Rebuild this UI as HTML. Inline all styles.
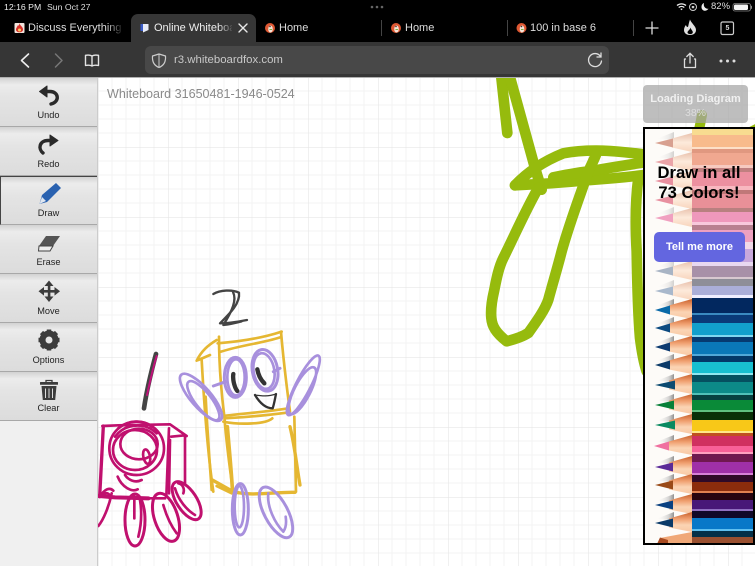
<!DOCTYPE html>
<html>
<head>
<meta charset="utf-8">
<style>
html,body{margin:0;padding:0;width:755px;height:566px;overflow:hidden;background:#fff;font-family:"Liberation Sans",Arial,sans-serif}
#r{position:absolute;left:0;top:0;width:755px;height:566px;overflow:hidden;filter:blur(.35px)}
.a{position:absolute;white-space:nowrap}
.btn{position:absolute;left:0;width:97px;background:linear-gradient(#d2d2d2 0,#ececec 14%,#e4e4e4 40%,#dcdcdc 100%);border-bottom:1px solid #a8a8a8;box-sizing:border-box}
.lbl{position:absolute;left:0;width:97px;text-align:center;font-size:9.2px;line-height:11px;color:#222}
.tab{font-size:11px;line-height:14px;color:#ddd;top:21px}
</style>
</head>
<body>
<div id="r">
<!-- canvas -->
<svg class="a" style="left:0;top:0" width="755" height="566" viewBox="0 0 755 566">
<defs>
<pattern id="g" x="0" y="0" width="70" height="70" patternUnits="userSpaceOnUse" patternTransform="translate(28,7)">
<path d="M14 0V70M28 0V70M42 0V70M56 0V70M0 14H70M0 28H70M0 42H70M0 56H70" stroke="#f3f3f3" stroke-width="1" fill="none"/>
<path d="M0 0V70M0 0H70" stroke="#e6e6e6" stroke-width="1.2" fill="none"/>
</pattern>
<linearGradient id="w" x1="0" y1="0" x2="0" y2="1"><stop offset="0" stop-color="#c8602c"/><stop offset=".35" stop-color="#f0a070"/><stop offset=".65" stop-color="#fbd4b4"/><stop offset="1" stop-color="#f8c8a4"/></linearGradient>
<linearGradient id="wl" x1="0" y1="0" x2="0" y2="1"><stop offset="0" stop-color="#e8c0ac"/><stop offset=".5" stop-color="#fdeadb"/><stop offset="1" stop-color="#f8d4bc"/></linearGradient>
<linearGradient id="s" x1="0" y1="0" x2="1" y2="0"><stop offset="0" stop-color="#fff" stop-opacity="0"/><stop offset=".7" stop-color="#bbb" stop-opacity=".6"/><stop offset="1" stop-color="#777" stop-opacity=".8"/></linearGradient>
<g id="sh"><polygon points="656,-4 674,-11 674,-3" fill="url(#s)"/></g>
<g id="shl"><polygon points="656,-4 674,-11 674,-3" fill="url(#s)" opacity=".4"/></g>
<g id="pl"><use href="#shl"/><polygon points="672,-4.500 692,-10 692,9 672,4.500" fill="url(#wl)"/></g>
<g id="pd"><use href="#sh"/><polygon points="669,-4.500 692,-11 692,9 669,4.500" fill="url(#w)"/></g>
</defs>
<rect width="755" height="566" fill="#fff"/>
<rect x="98" y="78" width="657" height="488" fill="url(#g)"/>

<!-- green strokes -->
<g transform="translate(470,78) scale(.33333)" fill="none" stroke="#96bb0d" stroke-width="32" stroke-linecap="round" stroke-linejoin="round">
<path d="M92,-20L112,165"/>
<path d="M115,-20L195,270L215,335"/>
<path d="M135,322C170,285 220,250 280,226C320,218 360,217 400,218C450,220 490,225 530,230"/>
<path d="M135,322C220,318 300,312 360,306C420,302 470,298 530,290"/>
<path d="M250,298C290,290 330,282 360,280C400,272 440,266 530,252"/>
<path d="M205,330C170,390 130,480 100,540C85,570 78,610 72,640C65,670 62,700 64,720C66,745 78,765 110,790C130,785 160,775 175,765C200,730 225,695 235,665C250,610 265,560 275,520C300,430 335,340 355,280C362,265 370,250 378,230"/>
<path d="M505,300C497,360 495,430 500,520C502,640 505,720 510,780C515,820 520,850 530,880"/>
</g>
<path d="M699 130L702 115" stroke="#96bb0d" stroke-width="10" stroke-linecap="round" fill="none"/>
<path d="M750 130L758 126" stroke="#96bb0d" stroke-width="6" fill="none"/>

<!-- characters -->
<g transform="translate(95,280) scale(.33333)" fill="none" stroke-linecap="round" stroke-linejoin="round">
<!-- 2 -->
<g stroke="#444" stroke-width="7">
<path d="M355,42C375,30 412,28 432,38C436,70 405,100 375,130C400,130 430,125 456,120"/>
<path d="M414,36C426,60 412,92 385,135C410,132 425,128 440,124"/>
</g>
<!-- 1 -->
<path d="M183,222C170,270 155,330 147,385" stroke="#444" stroke-width="14"/>
<path d="M185,228C172,270 165,305 156,345" stroke="#c0127a" stroke-width="6"/>
<!-- yellow -->
<g stroke="#e5b732" stroke-width="8">
<path d="M305,242C320,212 340,195 365,180"/>
<path d="M310,240L345,225"/>
<path d="M320,240C325,330 335,500 355,635"/>
<path d="M332,350C338,470 345,560 350,630"/>
<path d="M372,170C372,250 378,330 388,410C395,500 405,570 415,640"/>
<path d="M397,440C402,500 408,560 412,625" stroke-width="11"/>
<path d="M368,190C430,185 500,175 560,155"/>
<path d="M378,215C440,195 500,190 555,172"/>
<path d="M558,155C565,240 575,320 585,395"/>
<path d="M385,408C450,400 520,395 580,385"/>
<path d="M385,425C430,434 510,434 532,415"/>
<path d="M390,415C450,412 520,405 575,398"/>
<path d="M598,410L603,635"/>
<path d="M585,440C600,500 605,560 615,615" stroke-width="10"/>
<path d="M352,600L415,635C470,650 540,635 600,637" stroke-width="10"/>
<path d="M365,618L410,640"/>
</g>
<!-- purple -->
<g stroke="#a890dd" stroke-width="8">
<ellipse cx="318" cy="352" rx="90" ry="30" transform="rotate(49 318 352)"/>
<ellipse cx="325" cy="362" rx="72" ry="24" transform="rotate(52 325 362)"/>
<ellipse cx="625" cy="316" rx="100" ry="22" transform="rotate(-63 625 316)"/>
<ellipse cx="622" cy="332" rx="78" ry="24" transform="rotate(-63 622 332)"/>
<ellipse cx="421" cy="292" rx="33" ry="60" stroke-width="9"/>
<ellipse cx="423" cy="292" rx="26" ry="54"/>
<ellipse cx="510" cy="271" rx="38" ry="63" transform="rotate(-10 510 271)" stroke-width="9"/>
<ellipse cx="507" cy="273" rx="31" ry="54" transform="rotate(-10 507 273)"/>
<path d="M355,318L392,305M535,275L555,265" stroke-width="9"/>
<ellipse cx="436" cy="688" rx="24" ry="77" stroke-width="9"/>
<ellipse cx="433" cy="680" rx="14" ry="62"/>
<ellipse cx="543" cy="697" rx="35" ry="84" transform="rotate(-28 543 697)" stroke-width="9"/>
<path d="M520,640C515,680 540,730 565,755C572,745 575,730 572,710"/>
</g>
<!-- face -->
<path d="M415,282C412,300 420,325 427,333" stroke="#333" stroke-width="13"/>
<path d="M487,268C490,285 498,300 508,310" stroke="#333" stroke-width="13"/>
<path d="M480,345C495,370 512,385 533,385C538,370 540,355 543,342" stroke="#333" stroke-width="7"/>
<path d="M480,345C500,348 520,350 543,342" stroke="#333" stroke-width="4"/>
<!-- magenta -->
<g stroke="#c0106e" stroke-width="8">
<path d="M25,438L14,650" stroke-width="10"/>
<path d="M22,438L70,436L225,433L275,468" stroke-width="8"/>
<path d="M222,445L214,650" stroke-width="8"/>
<path d="M228,470L270,466L270,612" stroke-width="8"/>
<path d="M225,480L222,640"/>
<path d="M12,648L60,652L160,655" stroke-width="12"/>
<path d="M160,655L210,655"/>
<ellipse cx="125" cy="505" rx="82" ry="80"/>
<ellipse cx="120" cy="510" rx="66" ry="60"/>
<ellipse cx="132" cy="492" rx="56" ry="46"/>
<path d="M60,470C90,430 150,425 185,460"/>
<path d="M70,445C100,420 145,418 170,440"/>
<ellipse cx="155" cy="530" rx="10" ry="22" transform="rotate(-12 155 530)" stroke-width="8"/>
<path d="M68,590C80,620 110,638 128,628M90,585C100,600 120,610 140,600"/>
<ellipse cx="120" cy="720" rx="30" ry="78" stroke-width="9"/>
<path d="M118,650L118,715M135,660C140,690 140,730 130,770"/>
<ellipse cx="213" cy="712" rx="35" ry="75" transform="rotate(-18 213 712)" stroke-width="9"/>
<path d="M205,675C215,710 230,740 245,760"/>
<ellipse cx="275" cy="662" rx="30" ry="65" transform="rotate(-33 275 662)" stroke-width="9"/>
<path d="M240,625C250,660 275,690 300,705M250,610C262,612 270,625 265,640"/>
<path d="M50,640C42,680 25,720 10,738M15,650C30,625 45,622 55,632M25,645C35,635 45,640 45,655" stroke-width="8"/>
</g>
</g>

<!-- Colour panel -->
<rect x="644" y="128" width="110" height="416" fill="#fdfbf8"/>
<g>
<rect x="692" y="129" width="62" height="6" fill="#f8dc90"/>
<rect x="692" y="135" width="62" height="12" fill="#f8bb8c"/><rect x="692" y="147" width="62" height="2" fill="#fde0c8"/><rect x="692" y="149" width="62" height="4" fill="#e09880"/>
<rect x="692" y="153" width="62" height="12" fill="#f0a890"/><rect x="692" y="165" width="62" height="3" fill="#f6c9c0"/><rect x="692" y="168" width="62" height="4" fill="#c08080"/>
<rect x="692" y="172" width="62" height="14" fill="#ec90a0"/><rect x="692" y="186" width="62" height="4" fill="#f8b8c0"/><rect x="692" y="190" width="62" height="4" fill="#c07878"/>
<rect x="692" y="194" width="62" height="14" fill="#e89098"/><rect x="692" y="208" width="62" height="4" fill="#b88080"/>
<rect x="692" y="212" width="62" height="10" fill="#ef98bc"/><rect x="692" y="222" width="62" height="3" fill="#f8c8dc"/><rect x="692" y="225" width="62" height="5" fill="#b88090"/>
<rect x="692" y="230" width="62" height="12" fill="#eea0c0"/><rect x="692" y="242" width="62" height="7" fill="#f0d8e8"/>
<rect x="692" y="249" width="62" height="13" fill="#c8a8dc"/><rect x="692" y="262" width="62" height="4" fill="#e8d8f0"/>
<rect x="692" y="266" width="62" height="11" fill="#a890a8"/><rect x="692" y="277" width="62" height="2" fill="#d8c8d0"/><rect x="692" y="279" width="62" height="7" fill="#8e8e98"/>
<rect x="692" y="286" width="62" height="9" fill="#aaaed8"/><rect x="692" y="295" width="62" height="3" fill="#eef"/>
<rect x="692" y="298" width="62" height="15" fill="#02285f"/><rect x="692" y="313" width="62" height="2" fill="#3a8ac0"/><rect x="692" y="315" width="62" height="8" fill="#0a3a78"/>
<rect x="692" y="323" width="62" height="12" fill="#12a0cc"/><rect x="692" y="335" width="62" height="2" fill="#7fd8f0"/><rect x="692" y="337" width="62" height="5" fill="#063a70"/>
<rect x="692" y="342" width="62" height="12" fill="#0a78b8"/><rect x="692" y="354" width="62" height="2" fill="#50a8d8"/><rect x="692" y="356" width="62" height="6" fill="#033868"/>
<rect x="692" y="362" width="62" height="11" fill="#18bfd0"/><rect x="692" y="373" width="62" height="2" fill="#90e8f0"/><rect x="692" y="375" width="62" height="7" fill="#055060"/>
<rect x="692" y="382" width="62" height="11" fill="#0c8a88"/><rect x="692" y="393" width="62" height="2" fill="#50c0b8"/><rect x="692" y="395" width="62" height="5" fill="#064040"/>
<rect x="692" y="400" width="62" height="10" fill="#0a8a38"/><rect x="692" y="410" width="62" height="2" fill="#60c080"/><rect x="692" y="412" width="62" height="8" fill="#0a3008"/>
<rect x="692" y="420" width="62" height="11" fill="#f8c818"/><rect x="692" y="431" width="62" height="2" fill="#ffe888"/><rect x="692" y="433" width="62" height="3" fill="#c05020"/>
<rect x="692" y="436" width="62" height="10" fill="#d03060"/><rect x="692" y="446" width="62" height="6" fill="#f86098"/><rect x="692" y="452" width="62" height="2" fill="#ffa0c0"/><rect x="692" y="454" width="62" height="8" fill="#701850"/>
<rect x="692" y="462" width="62" height="11" fill="#a030a8"/><rect x="692" y="473" width="62" height="2" fill="#d880d8"/><rect x="692" y="475" width="62" height="7" fill="#300a28"/>
<rect x="692" y="482" width="62" height="9" fill="#8c2c0c"/><rect x="692" y="491" width="62" height="2" fill="#e08050"/><rect x="692" y="493" width="62" height="7" fill="#280410"/>
<rect x="692" y="500" width="62" height="9" fill="#481878"/><rect x="692" y="509" width="62" height="2" fill="#9070c0"/><rect x="692" y="511" width="62" height="7" fill="#100828"/>
<rect x="692" y="518" width="62" height="11" fill="#0878c8"/><rect x="692" y="529" width="62" height="2" fill="#60c0f0"/><rect x="692" y="531" width="62" height="6" fill="#043048"/>
<rect x="692" y="537" width="62" height="7" fill="#9a5030"/>
</g>
<!-- pencil tips -->
<use href="#pl" y="143"/><polygon points="655,143 673,138.500 673,147.500" fill="#d8a090"/>
<use href="#pl" y="162"/><polygon points="655,162 673,157.500 673,166.500" fill="#eaa4a8"/>
<use href="#pl" y="181"/><polygon points="655,181 673,176.500 673,185.500" fill="#e890a0"/>
<use href="#pl" y="200"/><polygon points="655,200 673,195.500 673,204.500" fill="#e890a0"/>
<use href="#pl" y="218"/><polygon points="655,218 673,213.500 673,222.500" fill="#f0a0c0"/>
<use href="#pl" y="271"/><polygon points="655,271 673,266.500 673,275.500" fill="#a8b4c4"/>
<use href="#pl" y="291"/><polygon points="655,291 673,286.500 673,295.500" fill="#a8b8cc"/>
<use href="#pd" y="310"/><polygon points="655,310 670,305.500 670,314.500" fill="#0a6aa8"/>
<use href="#pd" y="328"/><polygon points="655,328 670,323.500 670,332.500" fill="#0c4a80"/>
<use href="#pd" y="347"/><polygon points="655,347 670,342.500 670,351.500" fill="#0c3a70"/>
<use href="#pd" y="365"/><polygon points="655,365 670,360.500 670,369.500" fill="#0c3a68"/>
<use href="#pd" y="385"/><polygon points="655,385 675,380.500 675,389.500" fill="#0c4a70"/>
<use href="#pd" y="405"/><polygon points="655,405 674,400.500 674,409.500" fill="#088038"/>
<use href="#pd" y="425"/><polygon points="655,425 675,420.500 675,429.500" fill="#0a8a60"/>
<use href="#pd" y="446"/><polygon points="654,446 669,441.500 669,450.500" fill="#f070a0"/>
<use href="#pd" y="467"/><polygon points="655,467 673,462.500 673,471.500" fill="#5a2a98"/>
<use href="#pd" y="485"/><polygon points="655,485 673,480.500 673,489.500" fill="#9a4a18"/>
<use href="#pd" y="505"/><polygon points="655,505 673,500.500 673,509.500" fill="#0a4080"/>
<use href="#pd" y="523"/><polygon points="655,523 673,518.500 673,527.500" fill="#0a3a68"/>
<polygon points="658,544 660,538 692,532 692,544" fill="#f0a878"/><polygon points="657,544 660,537.500 668,540 668,544" fill="#a84a20"/>
<rect x="644" y="128" width="110" height="416" fill="none" stroke="#000" stroke-width="2"/>
</svg>

<div class="a" style="left:107px;top:87px;font-size:12.55px;line-height:15px;color:#8a8a8a">Whiteboard 31650481-1946-0524</div>

<!-- loading -->
<div class="a" style="left:643px;top:85px;width:105px;height:38px;background:rgba(165,165,165,.72);border-radius:4px"></div>
<div class="a" style="left:643px;top:92px;width:105px;text-align:center;font-size:11.1px;line-height:14px;font-weight:bold;color:#f0f0f0">Loading Diagram</div>
<div class="a" style="left:643px;top:106px;width:105px;text-align:center;font-size:10.5px;line-height:14px;color:#ddd">38%</div>

<!-- ad text -->
<div class="a" style="left:644px;top:163px;width:110px;text-align:center;font-size:16.6px;line-height:20px;font-weight:bold;color:#000">Draw in all<br>73 Colors!</div>
<div class="a" style="left:654px;top:232px;width:91px;height:30px;background:#6366e0;border-radius:5px;text-align:center;font-size:11px;line-height:30px;font-weight:bold;color:#fff">Tell me more</div>

<!-- sidebar -->
<div class="a" style="left:0;top:78px;width:97px;height:488px;background:#f0f0f0;border-right:1px solid #ccc"></div>
<div class="btn" style="top:78px;height:49px"></div>
<div class="btn" style="top:127px;height:49px"></div>
<div class="btn" style="top:176px;height:49px;border-top:1px solid #444;border-left:1px solid #444"></div>
<div class="btn" style="top:225px;height:49px"></div>
<div class="btn" style="top:274px;height:49px"></div>
<div class="btn" style="top:323px;height:49px"></div>
<div class="btn" style="top:372px;height:49px"></div>
<div class="lbl" style="top:110px">Undo</div>
<div class="lbl" style="top:159px">Redo</div>
<div class="lbl" style="top:208px">Draw</div>
<div class="lbl" style="top:257px">Erase</div>
<div class="lbl" style="top:306px">Move</div>
<div class="lbl" style="top:355px">Options</div>
<div class="lbl" style="top:403px">Clear</div>
<svg class="a" style="left:0;top:78px" width="97" height="345" viewBox="0 78 97 345">
<!-- undo -->
<path d="M47,86L39.5,91.5L47,97Z" fill="#2a2a2a" stroke="#2a2a2a" stroke-width="1" stroke-linejoin="round"/>
<path d="M45,91.5H50C59,91.500 60,102 51,104" fill="none" stroke="#2a2a2a" stroke-width="3.4" stroke-linecap="round"/>
<!-- redo -->
<path d="M50,135L58,140.500L50,146Z" fill="#2a2a2a" stroke="#2a2a2a" stroke-width="1" stroke-linejoin="round"/>
<path d="M52,140.500H48C39,140.500 38,149 43,153" fill="none" stroke="#2a2a2a" stroke-width="3.4" stroke-linecap="round"/>
<!-- pencil -->
<polygon points="39.500,204 42,195 56,183 61,188 47,202" fill="#2a62b0"/>
<polygon points="39.500,204 42,197 46,201" fill="#dfe6f0"/>
<!-- eraser -->
<polygon points="46,236 60,236 53,246 39,246" fill="#555"/>
<path d="M39,246H53L50,251H38.500Z" fill="#eee" stroke="#444" stroke-width="1"/>
<!-- move -->
<g fill="#3c3c3c">
<rect x="47.800" y="285" width="2.600" height="13"/><rect x="43" y="290" width="13" height="2.600"/>
<polygon points="49,280.500 53.500,286 44.500,286"/><polygon points="49,302 53.500,296.500 44.500,296.500"/>
<polygon points="38.500,291.300 44,287 44,295.600"/><polygon points="60,291.300 54.500,287 54.500,295.600"/>
</g>
<!-- gear -->
<circle cx="49" cy="340" r="6.500" fill="none" stroke="#3c3c3c" stroke-width="6"/>
<g stroke="#3c3c3c" stroke-width="4.500">
<path d="M49,329.500V333M49,347V350.500M38.500,340H42M56,340H59.500M41.500,332.500L44,335M54,345L56.500,347.500M41.500,347.500L44,345M54,335L56.500,332.500"/>
</g>
<!-- trash -->
<path d="M46,382V380.500H52V382" fill="none" stroke="#3c3c3c" stroke-width="1.300"/>
<rect x="40" y="382" width="18" height="2.800" rx=".6" fill="#3c3c3c"/>
<path d="M41.500,386H56.500L55.200,400H42.800Z" fill="#3c3c3c"/>
<path d="M45.500,388.500V398M49,388.500V398M52.500,388.500V398" stroke="#ddd" stroke-width="1"/>
</svg>

<!-- browser chrome -->
<div class="a" style="left:0;top:0;width:755px;height:42px;background:#000"></div>
<div class="a" style="left:0;top:42px;width:755px;height:35px;background:#363636"></div>
<div class="a" style="left:0;top:77px;width:755px;height:1px;background:#b0b0b0"></div>
<div class="a" style="left:131px;top:14px;width:125px;height:29px;background:#363636;border-radius:7px 7px 0 0"></div>
<div class="a" style="left:145px;top:46px;width:464px;height:28px;background:#484848;border-radius:6px"></div>

<div class="a" style="left:4px;top:1px;font-size:8.700px;line-height:12px;color:#eee">12:16 PM</div>
<div class="a" style="left:47px;top:1px;font-size:8.700px;line-height:12px;color:#ddd">Sun Oct 27</div>

<div class="a tab" style="left:28px;width:94px;overflow:hidden">Discuss Everything</div>
<div class="a" style="left:106px;top:20px;width:18px;height:16px;background:linear-gradient(90deg,rgba(0,0,0,0),#000)"></div>
<div class="a tab" style="left:154px;width:78px;overflow:hidden;color:#eee">Online Whiteboard</div>
<div class="a" style="left:218px;top:20px;width:16px;height:16px;background:linear-gradient(90deg,rgba(54,54,54,0),#363636)"></div>
<div class="a tab" style="left:279px">Home</div>
<div class="a tab" style="left:405px">Home</div>
<div class="a tab" style="left:530px">100 in base 6</div>
<div class="a" style="left:174px;top:52px;font-size:11.400px;line-height:16px;color:#c8c8c8">r3.whiteboardfox.com</div>
<div class="a" style="left:711px;top:1px;font-size:9.500px;line-height:12px;color:#ddd">82%</div>
<div class="a" style="left:723px;top:22.500px;width:9px;text-align:center;font-size:7px;line-height:11px;font-weight:bold;color:#ddd">5</div>

<svg class="a" style="left:0;top:0" width="755" height="78" viewBox="0 0 755 78">
<!-- dots -->
<g fill="#666"><circle cx="372" cy="7" r="1.300"/><circle cx="377" cy="7" r="1.300"/><circle cx="382" cy="7" r="1.300"/></g>
<!-- discuss favicon -->
<rect x="14.500" y="23" width="10" height="10" rx="1" fill="#f2e4dc"/>
<path d="M19.500,23C20,26 23.500,27 23,30C22.500,33 16.500,33 16,30C15.700,28 17.500,27 17.500,25.500C18.500,26 19.500,25 19.500,23Z" fill="#d8302a"/>
<circle cx="19.500" cy="30" r="1.500" fill="#f8d060"/>
<!-- whiteboard favicon -->
<path d="M140.500,24H148.500V30L143,32.500L143,31H140.500Z" fill="#e8ecf8"/>
<path d="M140.500,24H143V31H140.500Z" fill="#3a5cc8"/>
<!-- close -->
<path d="M239,24L247,32M247,24L239,32" stroke="#e8e8e8" stroke-width="1.400" stroke-linecap="round"/>
<!-- DDG favicons -->
<g id="d1"><circle cx="270" cy="28" r="5" fill="#de5833"/><ellipse cx="270.500" cy="29" rx="2.300" ry="3.500" fill="#f4e4d8"/><circle cx="270" cy="26.500" r=".8" fill="#333"/><path d="M269.500,29.500H272" stroke="#7cb342" stroke-width="1"/></g>
<g><circle cx="396" cy="28" r="5" fill="#de5833"/><ellipse cx="396.500" cy="29" rx="2.300" ry="3.500" fill="#f4e4d8"/><circle cx="396" cy="26.500" r=".8" fill="#333"/><path d="M395.500,29.500H398" stroke="#7cb342" stroke-width="1"/></g>
<g><circle cx="521.500" cy="28" r="5" fill="#de5833"/><ellipse cx="522" cy="29" rx="2.300" ry="3.500" fill="#f4e4d8"/><circle cx="521.500" cy="26.500" r=".8" fill="#333"/><path d="M521,29.500H523.500" stroke="#7cb342" stroke-width="1"/></g>
<!-- separators -->
<path d="M381.500,20V36M507.500,20V36M633.500,20V36" stroke="#444" stroke-width="1"/>
<!-- plus -->
<path d="M652,21.500V34.500M645.500,28H658.500" stroke="#ddd" stroke-width="1.300"/>
<!-- flame -->
<path d="M690,19.500C691,23 696,26 696,30C696,33.500 693,35 690,35C687,35 684,33.500 684,30C684,28 685,26 686,25C686.300,26.500 687,27 688,27C688.500,25 689,22 690,19.500Z" fill="#e0e0e0"/>
<path d="M690.500,27.500C691,30 693,30.500 692.800,32.500C692.500,34.500 688,34.800 687.500,32.500C687.300,31 690,30 690.500,27.500Z" fill="#000"/>
<!-- tabs count -->
<rect x="721" y="22" width="12.500" height="12.500" rx="1.500" fill="none" stroke="#ccc" stroke-width="1.200"/>
<!-- nav -->
<path d="M28.500,54L21.500,60.500L28.500,67" fill="none" stroke="#eee" stroke-width="1.600" stroke-linecap="round" stroke-linejoin="round"/>
<path d="M55.500,54L62,60.500L55.500,67" fill="none" stroke="#777" stroke-width="1.500" stroke-linecap="round" stroke-linejoin="round"/>
<path d="M92,56C90,54.800 88,54.800 85.500,55.300V65.500C88,65 90,65 92,66C94,65 96,65 98.500,65.500V55.300C96,54.800 94,54.800 92,56ZM92,56V66" fill="none" stroke="#e4e4e4" stroke-width="1.400" stroke-linejoin="round"/>
<!-- shield -->
<path d="M159,54L165.500,56C166,62 164,65.500 159,67.500C154,65.500 152,62 152.500,56Z" fill="none" stroke="#ccc" stroke-width="1.200" stroke-linejoin="round"/>
<path d="M159,54V67.500" stroke="#ccc" stroke-width="1"/>
<!-- reload -->
<path d="M600.500,56.500A6.500,6.500 0 1 0 601.500,61" fill="none" stroke="#ddd" stroke-width="1.300" stroke-linecap="round"/>
<path d="M601,52.500V57H596.500" fill="none" stroke="#ddd" stroke-width="1.300"/>
<!-- share -->
<path d="M686,59H684.500V67.500H695.500V59H694" fill="none" stroke="#ddd" stroke-width="1.300" stroke-linejoin="round"/>
<path d="M690,63V53.500M686.800,56.500L690,53.300L693.200,56.500" fill="none" stroke="#ddd" stroke-width="1.300" stroke-linecap="round"/>
<!-- more -->
<g fill="#ddd"><circle cx="721" cy="61" r="1.500"/><circle cx="727.500" cy="61" r="1.500"/><circle cx="734" cy="61" r="1.500"/></g>
<!-- wifi -->
<path d="M677,5.500A7,7 0 0 1 686,5.500M678.700,7.500A4.500,4.500 0 0 1 684.300,7.500" fill="none" stroke="#eee" stroke-width="1.300"/>
<path d="M680.300,9L681.500,10.300L682.700,9A2,2 0 0 0 680.300,9Z" fill="#eee"/>
<!-- orientation lock -->
<circle cx="693" cy="7" r="3.500" fill="none" stroke="#ccc" stroke-width="1"/><rect x="691.800" y="6" width="2.400" height="2.200" fill="#ccc"/>
<!-- moon -->
<path d="M704,3C701,4 700.500,9 703.500,10.500C705.500,11.300 707.500,10.300 708.500,8.800C705.500,9 703,6.500 704,3Z" fill="#eee"/>
<!-- battery -->
<rect x="733" y="3.500" width="17.500" height="7.500" rx="2" fill="none" stroke="#888" stroke-width=".8"/>
<rect x="734" y="4.500" width="14" height="5.500" rx="1.200" fill="#f4f4f4"/>
<rect x="751" y="5.800" width="1" height="3" fill="#888"/>
</svg>
</div>
</body>
</html>
